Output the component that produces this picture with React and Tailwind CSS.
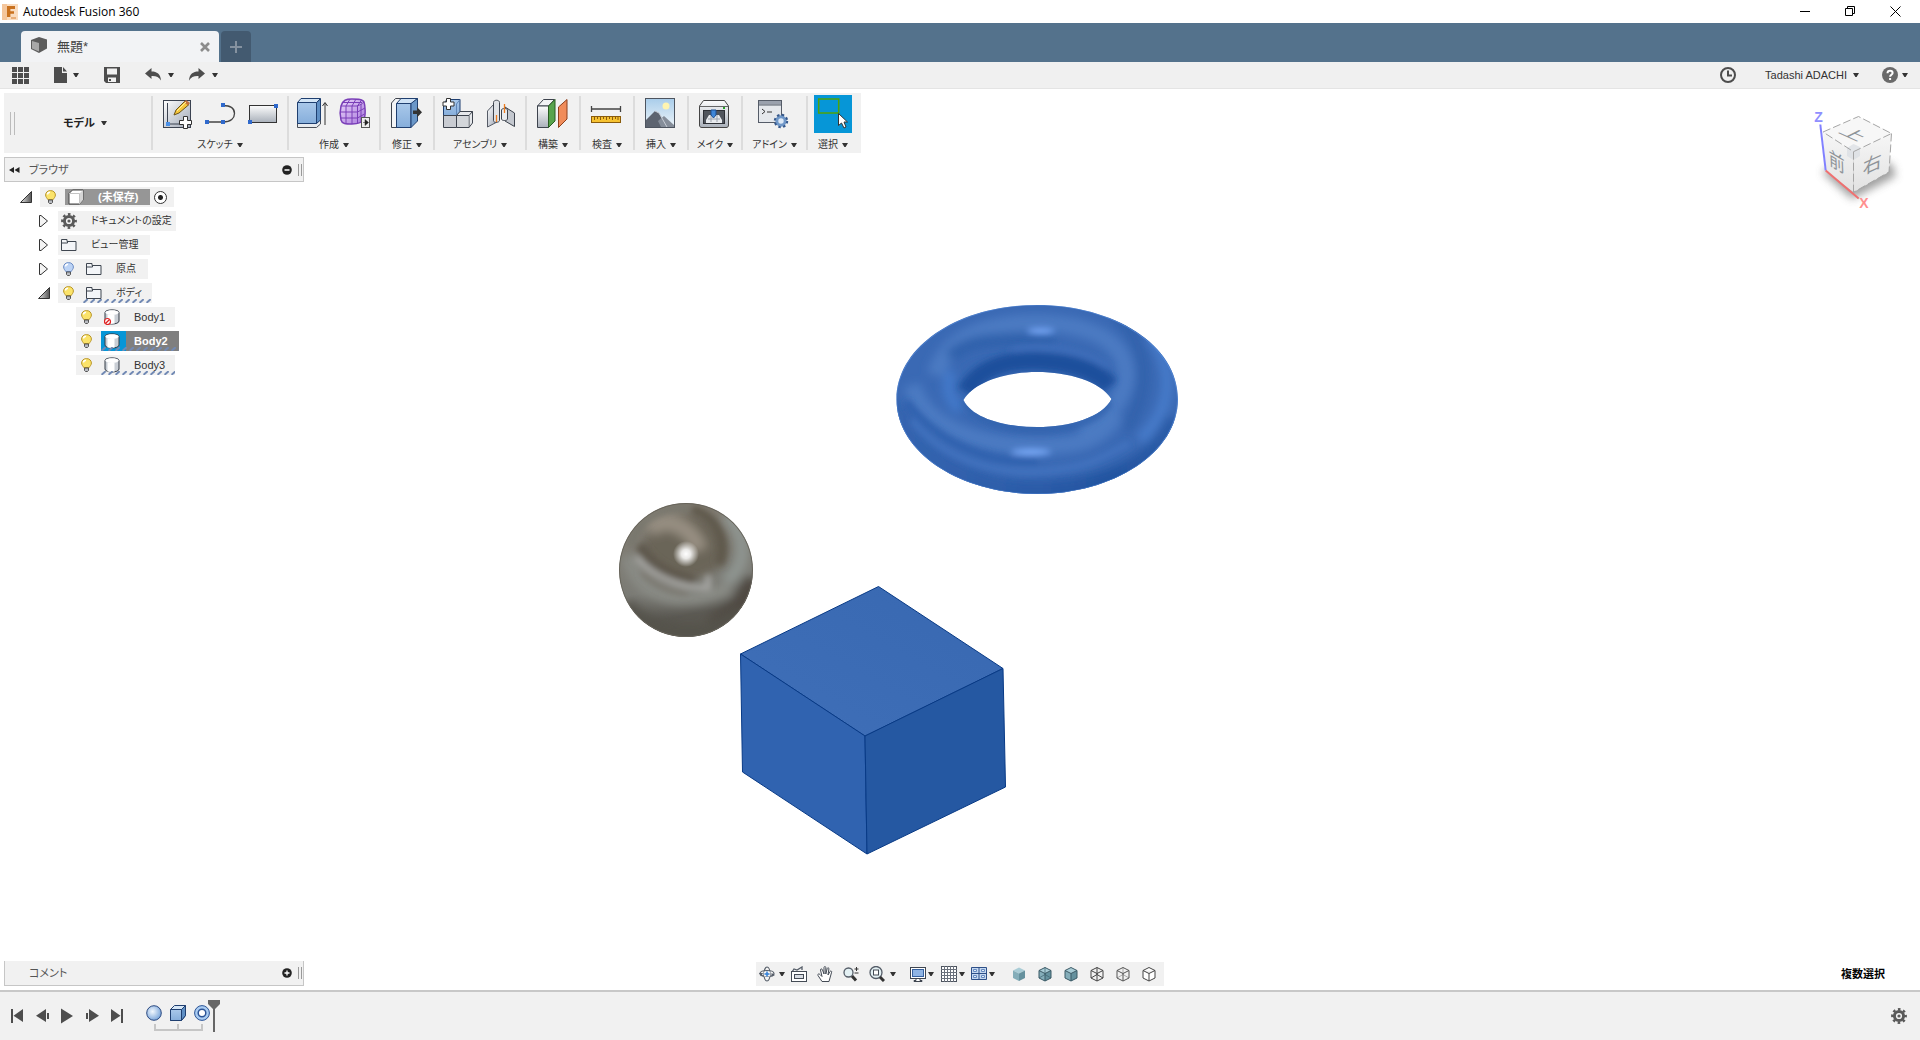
import { useState } from "react";

const uiFont =
  "font-['Liberation_Sans','Noto_Sans_CJK_JP',sans-serif] [font-feature-settings:'palt']";

export default function App() {
  return (
    <div
      className={`min-h-screen flex flex-col bg-white text-[11px] leading-4 text-[#333] ${uiFont}`}
    >
      <Defs />
      <TitleBar />
      <DocumentTabs />
      <QuickAccess />

      {/* Viewport with the panels floating over the model */}
      <main className="relative flex flex-1 flex-col">
        <Scene />
        <ViewCube />
        <Ribbon />
        <Browser />
        <div className="relative mt-auto grid grid-cols-[1fr_auto_1fr] items-end pb-1">
          <Comments />
          <NavigationBar />
          <p className="self-center pr-[35px] text-right font-bold text-black">
            複数選択
          </p>
        </div>
      </main>

      <Timeline />
    </div>
  );
}

// ---- Shared bits ----
function Icon({ size = 16, className = "", children }) {
  return (
    <svg
      width={size}
      height={size}
      viewBox={`0 0 ${size} ${size}`}
      fill="none"
      className={`shrink-0 ${className}`}
      aria-hidden="true"
    >
      {children}
    </svg>
  );
}

function Arrow({ className = "" }) {
  return (
    <svg
      width="6"
      height="4"
      viewBox="0 0 6 4"
      className={`shrink-0 ${className}`}
      aria-hidden="true"
    >
      <path d="M0 0h6L3.6 4H2.4z" fill="#333" />
    </svg>
  );
}

function Gear() {
  return (
    <Icon>
      <circle cx="8" cy="8" r="4.6" stroke="#5a5a5a" strokeWidth="3" />
      <circle
        cx="8"
        cy="8"
        r="6.7"
        stroke="#5a5a5a"
        strokeWidth="2.4"
        strokeDasharray="2.6 2.66"
        strokeDashoffset="1.3"
      />
      <circle cx="8" cy="8" r="1.6" fill="#5a5a5a" />
    </Icon>
  );
}

// Gradients used by the icons
function Defs() {
  return (
    <svg className="absolute size-0" aria-hidden="true">
      <defs>
        <linearGradient id="steel" x1="0" y1="0" x2="0" y2="1">
          <stop offset="0" stopColor="#fdfdfd" />
          <stop offset="1" stopColor="#a9b0ba" />
        </linearGradient>
        <linearGradient id="steelDiag" x1="0" y1="0" x2="1" y2="1">
          <stop offset="0" stopColor="#ffffff" />
          <stop offset="1" stopColor="#9ea6b4" />
        </linearGradient>
        <linearGradient id="sky" x1="0" y1="0" x2="0" y2="1">
          <stop offset="0" stopColor="#a9c8ea" />
          <stop offset="1" stopColor="#86aedb" />
        </linearGradient>
        <linearGradient id="photo" x1="0" y1="0" x2="0" y2="1">
          <stop offset="0" stopColor="#a9cdea" />
          <stop offset="1" stopColor="#eef5fa" />
        </linearGradient>
        <linearGradient id="mesh" x1="0" y1="0" x2="1" y2="1">
          <stop offset="0" stopColor="#ead6fa" />
          <stop offset="1" stopColor="#a878dc" />
        </linearGradient>
        <radialGradient id="ball" cx="0.4" cy="0.4" r="0.6">
          <stop offset="0" stopColor="#f2f8fe" />
          <stop offset="1" stopColor="#7fa9dc" />
        </radialGradient>
        <linearGradient id="corner" x1="0" y1="0" x2="1" y2="0">
          <stop offset="0" stopColor="#e5e5e5" />
          <stop offset="1" stopColor="#555" />
        </linearGradient>
        <pattern
          id="hatch"
          width="7"
          height="4"
          patternUnits="userSpaceOnUse"
        >
          <path
            d="M1.2 3.2L4 0.8"
            stroke="#7189b4"
            strokeWidth="2"
            strokeLinecap="round"
          />
        </pattern>
      </defs>
    </svg>
  );
}

// ---- Window chrome ----
function TitleBar() {
  return (
    <header className="flex h-[23px] items-center pl-[2px] pr-[19px]">
      <Icon size={16}>
        <rect width="16" height="16" fill="#f9dcc0" />
        <path d="M0 0h5v16H0z" fill="#f4c69c" />
        <path
          d="M5 2h8v3H8.4v2.2h3.6v2.6H8.4V13H5z"
          fill="#c9711e"
        />
        <path d="M9 13h5v2H9z" fill="#e9ae78" />
      </Icon>
      <h1 className="ml-[5px] font-['Open_Sans',sans-serif] text-xs text-black">
        Autodesk Fusion 360
      </h1>
      <div className="ml-auto flex items-center gap-[34px] text-black">
        <button type="button" aria-label="Minimize">
          <Icon size={11}>
            <path d="M0 5.5h10" stroke="currentColor" />
          </Icon>
        </button>
        <button type="button" aria-label="Restore">
          <Icon size={11}>
            <path
              d="M0.5 2.5h7v7h-7zM2.5 2.5v-2h7v7h-2"
              stroke="currentColor"
            />
          </Icon>
        </button>
        <button type="button" aria-label="Close">
          <Icon size={11}>
            <path d="M0.5 0.5l10 10M10.5 0.5l-10 10" stroke="currentColor" />
          </Icon>
        </button>
      </div>
    </header>
  );
}

function DocumentTabs() {
  return (
    <div className="flex h-[39px] items-end gap-[2px] bg-[#54728c] pl-[21px]">
      <div className="flex h-[31px] w-[198px] items-center rounded-t bg-[#f2f3f5] pl-[10px] pr-[9px]">
        <Icon size={16} className="mb-1">
          <path d="M0 3l8-3 8 2.5v9L8 16l-8-4z" fill="#5c5c5c" />
          <path d="M1 4l7 2v8.6L1 11.4z" fill="#a8a8a8" />
        </Icon>
        <span className="ml-[10px] text-[13px] text-[#444]">無題*</span>
        <button type="button" aria-label="Close tab" className="ml-auto">
          <Icon size={10}>
            <path
              d="M1 1l8 8M9 1l-8 8"
              stroke="#8c8c8c"
              strokeWidth="2.6"
            />
          </Icon>
        </button>
      </div>
      <button
        type="button"
        aria-label="New tab"
        className="flex h-[31px] w-[30px] items-center justify-center rounded-t bg-[#435a70]"
      >
        <Icon size={12}>
          <path d="M6 0v12M0 6h12" stroke="#8592a0" strokeWidth="2" />
        </Icon>
      </button>
    </div>
  );
}

function QuickAccess() {
  return (
    <div className="flex h-[27px] items-center border-b border-[#e4e4e4] bg-[#f0f0f0] pl-3 pr-3">
      <button type="button" aria-label="Data panel">
        <Icon size={17}>
          <path
            d="M0 0h5v5H0zM6 0h5v5H6zM12 0h5v5h-5zM0 6h5v5H0zM6 6h5v5H6zM12 6h5v5h-5zM0 12h5v5H0zM6 12h5v5H6zM12 12h5v5h-5z"
            fill="#4d4d4d"
          />
        </Icon>
      </button>
      <button
        type="button"
        aria-label="File"
        className="ml-[25px] flex items-center gap-[3px]"
      >
        <Icon>
          <path d="M0 0h8v6h5v10H0zM9 0l4 4.6H9z" fill="#4d4d4d" />
        </Icon>
        <Arrow />
      </button>
      <button type="button" aria-label="Save" className="ml-[25px]">
        <Icon>
          <path
            fillRule="evenodd"
            d="M0 0h16v16H2l-2-2zM3 1.5v6h10v-6zM4 10.5V15h8v-4.5z"
            fill="#4d4d4d"
          />
          <path d="M5 12h2v2H5z" fill="#4d4d4d" />
        </Icon>
      </button>
      <button
        type="button"
        aria-label="Undo"
        className="ml-[25px] flex items-center gap-[7px]"
      >
        <Icon>
          <path
            d="M0 6.5L6.5 1v3.5C12 4.5 15.5 7 16 13.5C14 9.8 11 8.8 6.5 9V12z"
            fill="#4d4d4d"
          />
        </Icon>
        <Arrow />
      </button>
      <button
        type="button"
        aria-label="Redo"
        className="ml-[15px] flex items-center gap-[7px]"
      >
        <Icon>
          <path
            d="M16 6.5L9.5 1v3.5C4 4.5 0.5 7 0 13.5C2 9.8 5 8.8 9.5 9V12z"
            fill="#4d4d4d"
          />
        </Icon>
        <Arrow />
      </button>

      <button type="button" aria-label="Job status" className="ml-auto">
        <Icon>
          <circle cx="8" cy="8" r="7" stroke="#4d4d4d" strokeWidth="2" />
          <path d="M8 3.5V8.5h4" stroke="#4d4d4d" strokeWidth="2" />
        </Icon>
      </button>
      <button type="button" className="ml-[29px] flex items-center gap-[6px]">
        Tadashi ADACHI
        <Arrow />
      </button>
      <button
        type="button"
        aria-label="Help"
        className="ml-[23px] flex items-center gap-1"
      >
        <Icon>
          <circle cx="8" cy="8" r="8" fill="#6a6a6a" />
          <path
            d="M5.500 6.2C5.5 3 10.6 3.2 10.6 6C10.6 7.8 8.1 7.8 8.1 9.8M8.1 11v2"
            stroke="#fff"
            strokeWidth="2"
          />
        </Icon>
        <Arrow />
      </button>
    </div>
  );
}

// ---- Ribbon ----
const groups = [
  { label: "スケッチ", pad: "px-[6px]", tools: [SketchIcon, ArcIcon, RectIcon] },
  { label: "作成", pad: "px-[5px]", tools: [ExtrudeIcon, FormIcon] },
  { label: "修正", pad: "px-[7px]", tools: [PressPullIcon] },
  { label: "アセンブリ", pad: "px-[5px]", tools: [ComponentIcon, JointIcon] },
  { label: "構築", pad: "px-[7px]", tools: [PlaneIcon] },
  { label: "検査", pad: "px-[7px]", tools: [MeasureIcon] },
  { label: "挿入", pad: "px-[7px]", tools: [ImageIcon] },
  { label: "メイク", pad: "px-[7px]", tools: [PrintIcon] },
  { label: "アドイン", pad: "px-[9px]", tools: [ScriptIcon] },
  { label: "選択", pad: "pl-[6px] pr-[9px]", tools: [SelectIcon], active: true },
];

function Ribbon() {
  return (
    <div className="relative mt-1 ml-1 flex h-[60px] self-start bg-[#f1f1f1]">
      <div className="flex w-[147px] items-center pl-[6px]">
        <span className="h-[23px] w-[5px] border-x border-[#bbb]" />
        <button
          type="button"
          className="mx-auto flex items-center gap-[6px] pl-1 font-bold text-[#222]"
        >
          モデル
          <Arrow />
        </button>
      </div>
      {groups.map((group) => (
        <RibbonGroup key={group.label} {...group} />
      ))}
    </div>
  );
}

function RibbonGroup({ label, pad, tools, active }) {
  return (
    <div className="flex">
      <span className="my-[3px] w-[2px] bg-[#dcdcdc]" />
      <div className={`flex flex-col items-center pt-[2px] ${pad}`}>
        <div className="flex gap-1">
          {tools.map((Tool, i) => (
            <button
              key={i}
              type="button"
              aria-label={`${label} ${i + 1}`}
              className={active ? "bg-[#0696d7]" : ""}
            >
              <Tool />
            </button>
          ))}
        </div>
        <button
          type="button"
          className="mt-1 flex h-4 items-center gap-1 whitespace-nowrap text-[10px]"
        >
          {label}
          <Arrow />
        </button>
      </div>
    </div>
  );
}

function SketchIcon() {
  return (
    <Icon size={38}>
      <rect x="4.5" y="5.5" width="27" height="27" fill="url(#steelDiag)" stroke="#3b4250" />
      <path d="M8.5 8v21H29" stroke="#3b4250" />
      <rect x="7" y="27" width="4" height="4" fill="#4a90e8" />
      <path d="M15 20l2-5L26 6l4 3.5L20 18z" fill="#f7c73c" stroke="#6b5418" />
      <path d="M25 7l2-2 4 3-2 2.5z" fill="#c0703c" />
      <path d="M18 16l9-9" stroke="#fdf0a0" />
      <path
        d="M24.5 21.5h4v4h4v4h-4v4h-4v-4h-4v-4h4z"
        fill="#fff"
        stroke="#333"
      />
    </Icon>
  );
}

function ArcIcon() {
  return (
    <Icon size={38}>
      <path
        d="M6 27H22C30 27 33.5 23 33.5 18.5S30 10.5 22 10.5"
        stroke="#444"
        strokeWidth="1.3"
      />
      <path d="M4 25h4v4H4zM20 25h4v4h-4zM20 8h4v4h-4z" fill="#2f69cc" />
    </Icon>
  );
}

function RectIcon() {
  return (
    <Icon size={38}>
      <rect x="6.5" y="10.5" width="27" height="17" fill="url(#steel)" stroke="#333" />
      <path d="M5 25h4v4H5zM31 9h4v4h-4z" fill="#2f69cc" />
    </Icon>
  );
}

function ExtrudeIcon() {
  return (
    <Icon size={38}>
      <path d="M3.5 28h19l4-4v5l-4 3.5h-19z" fill="#e8ebef" stroke="#4a4f58" />
      <path d="M22.5 7.5l4-3.5v21l-4 3.5z" fill="#5f8fc4" stroke="#1f3f70" />
      <path d="M3.5 7.5L7 3.5h19.5l-4 4z" fill="#d3e5f6" stroke="#1f3f70" />
      <path d="M3.5 7.5h19v21h-19z" fill="url(#sky)" stroke="#1f3f70" />
      <path d="M31 30V8M28.5 11L31 7.5l2.5 3.5" stroke="#333" />
    </Icon>
  );
}

function FormIcon() {
  return (
    <Icon size={38}>
      <path
        d="M5 11C7 5 10 4 16 4S27 4 28 7 30 20 28 24 22 29 16 29 6 29 5 25 4 15 5 11z"
        fill="url(#mesh)"
        stroke="#7a3fb8"
        strokeWidth="1.5"
      />
      <path
        d="M5 11h16c3-1 5-2 7-4M4.500 17h17l7.5-4M4.5 23h17l7-4M10 29V11l4-7M16 29V11l4-7M21.5 29V11l4-6M25 27V9M7 7.5h19"
        stroke="#7a3fb8"
      />
      <rect x="25.5" y="22.5" width="8" height="10" fill="#eee" stroke="#555" />
      <path d="M27 27.5h3M29 24.500l3.500 3-3.500 3z" fill="#222" stroke="#222" strokeWidth="0.5" />
    </Icon>
  );
}

function PressPullIcon() {
  return (
    <Icon size={38}>
      <path d="M3.5 8l4-4.5h8L11 9v23.5H3.5z" fill="#f4f5f7" stroke="#3d434d" />
      <path d="M8.5 8.5L13 3.5h16.5l-6 5z" fill="#cfe2f5" stroke="#1f3f70" />
      <path d="M8.5 8.5h14.500v24H8.5z" fill="url(#sky)" stroke="#1f3f70" />
      <path d="M23 8.5l6.5-5V26L23 32.5z" fill="#6a97c8" stroke="#1f3f70" />
      <path d="M25 15.5h4V12l5 5.2-5 5.2V19h-4z" fill="#333" />
    </Icon>
  );
}

function ComponentIcon() {
  return (
    <Icon size={38}>
      <path d="M3.5 8.5L7 4.5h13V17l-3.5 4h-13z" fill="url(#sky)" stroke="#1f3f70" />
      <path d="M16.5 20.5V9M16.5 9L20 4.5" stroke="#5f86b8" />
      <path d="M3.5 20.5h13v12h-13z" fill="#c9ccd2" stroke="#3d434d" />
      <path d="M16.5 20.5L20 16.5h12.5V28L29 32.5H16.5z" fill="#e6e8eb" stroke="#3d434d" />
      <path d="M16.5 20.5H29v12M29 20.5l3.5-4" stroke="#3d434d" />
      <path d="M17 21h11.5v11H17z" fill="#d3d6da" />
      <path
        d="M6.5 3.5h4v3.5H14v4h-3.500v3.5h-4V11H3V7h3.500z"
        fill="#fff"
        stroke="#333"
      />
    </Icon>
  );
}

function JointIcon() {
  return (
    <Icon size={38}>
      <path d="M5.5 16L12 9l3 4v14l-9.5 5z" fill="url(#steelDiag)" stroke="#555b66" />
      <path d="M11.5 7.5c0-3 6-3 6 0v18c0 2-6 3-6 0z" fill="#dfe2e6" stroke="#3d434d" />
      <path d="M23 12l9.5 6v13.5L23 26z" fill="#c4c8cf" stroke="#3d434d" />
      <path d="M19.500 15c0-2 6-2 6 0v9c0 2-6 2-6 0z" fill="#e9ebee" stroke="#3d434d" />
      <path d="M14.5 20v7M22.5 9v9" stroke="#ee7b1c" strokeWidth="1.3" />
    </Icon>
  );
}

function PlaneIcon() {
  return (
    <Icon size={38}>
      <path d="M3.5 11L9.5 4.5h11l-6 6.5z" fill="#f2f3f5" stroke="#3d434d" />
      <path d="M3.5 11h11v21.5h-11z" fill="url(#steel)" stroke="#3d434d" />
      <path d="M14.5 11l6.5-6.5V26l-6.5 6.5z" fill="#57a34c" stroke="#285c22" />
      <path d="M24.5 12l8.5-7.5V24l-8.5 8.5z" fill="#f08c5a" stroke="#8d3f1c" />
    </Icon>
  );
}

function MeasureIcon() {
  return (
    <Icon size={38}>
      <path d="M3.5 11v6M32.5 11v6M3.5 14h29" stroke="#444" strokeWidth="1.3" />
      <rect x="3.5" y="21.5" width="29" height="6" fill="#f6c231" stroke="#8a5c0c" />
      <path
        d="M6.5 22v3M9.5 22v2M12.5 22v3M15.5 22v2M18.5 22v3M21.5 22v2M24.5 22v3M27.5 22v2M30 22v3"
        stroke="#8a5c0c"
      />
    </Icon>
  );
}

function ImageIcon() {
  return (
    <Icon size={38}>
      <rect x="3.5" y="3.5" width="29" height="29" fill="url(#photo)" stroke="#4d545f" />
      <circle cx="24" cy="11" r="3.5" fill="#fff4b0" />
      <path d="M4 25l9-9 4 2 8 14H4z" fill="#5d6470" />
      <path d="M16 26l6-5 10 9v2H19z" fill="#858d99" />
      <path d="M13 16l4 2 8 14" stroke="#c8cdd5" />
    </Icon>
  );
}

function PrintIcon() {
  return (
    <Icon size={38}>
      <path d="M3.5 11l4-5.5h21l4 5.5v19c0 2-1 2.5-2.5 2.5H6c-2 0-2.500-1-2.500-2.5z" fill="url(#steel)" stroke="#444" />
      <path d="M3.5 11.5h29" stroke="#666" />
      <rect x="7.5" y="15.5" width="21" height="13" fill="#50555d" stroke="#2c2f35" />
      <path d="M10 25l3-5h10l3 5v3H10z" fill="#e8ebef" />
      <path d="M12 24h12M15 20v7M21 20v7" stroke="#9aa1ab" />
      <path d="M15 15h5v5l-2.5 3-2.5-3z" fill="#3e86d8" stroke="#1d4f90" />
      <rect x="27" y="12" width="2" height="2" fill="#25a025" />
    </Icon>
  );
}

function ScriptIcon() {
  return (
    <Icon size={38}>
      <rect x="3.5" y="5.5" width="23" height="22" fill="#e5e8ec" stroke="#555c68" />
      <path d="M4 6h22v3.5H4z" fill="#9aa1ad" />
      <path d="M3.5 10h23" stroke="#555c68" />
      <path d="M7 14l3 2.5L7 19M12 17h5" stroke="#333" />
      <circle cx="26" cy="26" r="4.2" fill="#dce8f6" stroke="#6f97c8" strokeWidth="3" />
      <circle
        cx="26"
        cy="26"
        r="6.2"
        stroke="#35588c"
        strokeWidth="2"
        strokeDasharray="2.5 2.37"
      />
    </Icon>
  );
}

function SelectIcon() {
  return (
    <Icon size={38}>
      <rect x="4.7" y="4" width="20" height="14" stroke="#4fa30a" strokeWidth="1.5" />
      <path
        d="M24.5 18.5v12l3-2.5 2.5 5 2-1-2-5h3.5z"
        fill="#fff"
        stroke="#333"
      />
    </Icon>
  );
}

// ---- Browser tree ----
function Browser() {
  const [open, setOpen] = useState(true);

  return (
    <section className="relative mt-1 ml-1 w-[300px]">
      <header className="flex h-[25px] items-center border border-[#c6c6c6] bg-[#f1f1f1] pl-1 pr-[1px]">
        <Icon size={12}>
          <path d="M0 6l5-3v6zM5.5 6l5-3v6z" fill="#222" />
        </Icon>
        <h2 className="ml-2 text-[#555]">ブラウザ</h2>
        <button
          type="button"
          aria-label="Collapse browser"
          className="ml-auto"
          onClick={() => setOpen(!open)}
        >
          <Icon size={10}>
            <circle cx="5" cy="5" r="4.8" fill="#222" />
            <path d="M2.5 5h5" stroke="#fff" strokeWidth="1.5" />
          </Icon>
        </button>
        <span className="ml-[6px] h-3 w-1 border-x border-[#999]" />
      </header>
      {open && (
        <ul className="mt-[5px] space-y-1">
          <li className="flex items-center gap-2 pl-4">
            <Toggle open />
            <div className="flex h-5 items-center bg-[#f1f1f1] pl-[5px] pr-[7px]">
              <Bulb on />
              <span className="ml-2 flex h-4 items-center bg-[#969696] pl-[3px] pr-3">
                <BoxIcon />
                <span className="ml-[14px] font-bold text-white">
                  (未保存)
                </span>
              </span>
              <input
                type="radio"
                name="active-component"
                aria-label="Activate component"
                defaultChecked
                className="ml-1 size-[13px] appearance-none rounded-full border border-[#333] bg-[radial-gradient(circle,#222_0_2px,#fff_3px)]"
              />
            </div>
          </li>
          <TreeItem icon={<Gear />} label="ドキュメントの設定" pad="pr-1" />
          <TreeItem icon={<Folder />} label="ビュー管理" pad="pr-3" />
          <TreeItem bulb="off" icon={<Folder />} label="原点" pad="pr-3" />
          <TreeItem bulb="on" icon={<Folder />} label="ボディ" pad="pr-[10px]" open hatched />
          <TreeItem bulb="on" icon={<BodyIcon blocked />} label="Body1" pad="pr-[10px]" leaf />
          <TreeItem bulb="on" icon={<BodyIcon />} label="Body2" pad="pr-[11px]" leaf hatched selected />
          <TreeItem bulb="on" icon={<BodyIcon />} label="Body3" pad="pr-[10px]" leaf hatched />
        </ul>
      )}
    </section>
  );
}

function TreeItem({ bulb, icon, label, pad, open, leaf, hatched, selected }) {
  return (
    <li className={`flex items-center gap-2 ${leaf ? "pl-16" : "pl-[34px] text-[10px]"}`}>
      {!leaf && <Toggle open={open} />}
      <div className={`flex h-5 items-center bg-[#f1f1f1] ${leaf ? "ml-2" : ""}`}>
        {bulb && (
          <span className="pl-[5px] pr-2">
            <Bulb on={bulb === "on"} />
          </span>
        )}
        <div className="relative flex h-5 items-center">
          <span
            className={`flex h-full items-center pl-[3px] pr-[6px] ${
              selected ? "bg-[#0696d7]" : ""
            }`}
          >
            {icon}
          </span>
          <span
            className={`flex h-full items-center pl-2 ${pad} ${
              selected ? "bg-[#7f7f7f] font-bold text-white" : ""
            }`}
          >
            {label}
          </span>
          {hatched && (
            <svg
              className="absolute inset-x-0 bottom-0 h-1 w-full"
              aria-hidden="true"
            >
              <rect width="100%" height="4" fill="url(#hatch)" />
            </svg>
          )}
        </div>
      </div>
    </li>
  );
}

function Toggle({ open }) {
  return (
    <button type="button" aria-label={open ? "Collapse" : "Expand"}>
      <Icon size={12}>
        {open ? (
          <path d="M0.5 11.5L11.5 0.5v11z" fill="url(#corner)" stroke="#333" />
        ) : (
          <path d="M1.5 0.5h1.500l6.500 5.500-6.500 5.500H1.500z" fill="#f4f4f4" stroke="#333" />
        )}
      </Icon>
    </button>
  );
}

function Bulb({ on }) {
  return (
    <svg width="12" height="14" viewBox="0 0 12 14" aria-hidden="true">
      <path
        d="M5.500 0.600C2.500 0.600 0.600 2.600 0.600 5c0 2 1.400 3 2.200 4.500h5.400C9 8 10.400 7 10.400 5c0-2.400-1.900-4.400-4.900-4.400z"
        fill={on ? "#fbe36a" : "#bcd3f5"}
        stroke={on ? "#b8952a" : "#6c8cc4"}
      />
      <path d="M2.500 4.500c0-1.500 1-2.300 2.500-2.300" stroke="#fff" strokeWidth="1.500" fill="none" />
      <path d="M3.500 10h4v2.500l-1 1h-2l-1-1z" fill="#b9bcc2" stroke="#555" />
    </svg>
  );
}

function BoxIcon() {
  return (
    <Icon>
      <path d="M1 4.5L4.5 1H15v10l-3.500 4H1z" fill="#fff" stroke="#444" />
      <path d="M11.500 4.5L15 1v10l-3.5 4z" fill="#d5d5d5" />
      <path d="M1 4.500h10.5V15" stroke="#c4c4c4" />
    </Icon>
  );
}

function Folder() {
  return (
    <Icon>
      <path
        d="M0.5 13.5v-11h5.5v2h9v9z"
        fill="#f3f5f8"
        stroke="#3f4650"
      />
      <path d="M1 6h5.5V4.5" stroke="#3f4650" />
    </Icon>
  );
}

function BodyIcon({ blocked }) {
  return (
    <Icon>
      <path
        d="M1 3.5C1 0 15 0 15 3.5V12c0 4-14 4-14 0z"
        fill="#c9ced5"
        stroke="#333a45"
      />
      <path d="M1.5 4C3 6.5 13 6.5 14.5 4V3C13 0.5 3 0.5 1.5 3z" fill="#fff" />
      <path d="M3.500 5.5v9c2 .5 4.500 .5 7 0v-9z" fill="#fff" />
      {blocked && (
        <>
          <circle cx="3.5" cy="12.5" r="3" fill="#fff" stroke="#e02020" strokeWidth="1.2" />
          <path d="M1.5 14.5l4-4" stroke="#e02020" strokeWidth="1.2" />
        </>
      )}
    </Icon>
  );
}

function Comments() {
  return (
    <section className="ml-1 flex h-[25px] w-[300px] items-center border border-t-0 border-[#c6c6c6] bg-[#f1f1f1] pl-6 pr-[1px]">
      <h2 className="text-[#555]">コメント</h2>
      <button type="button" aria-label="Expand comments" className="ml-auto">
        <Icon size={10}>
          <circle cx="5" cy="5" r="4.8" fill="#222" />
          <path d="M2.5 5h5M5 2.5v5" stroke="#fff" strokeWidth="1.3" />
        </Icon>
      </button>
      <span className="ml-[6px] h-3 w-1 border-x border-[#999]" />
    </section>
  );
}

// ---- Navigation bar ----
const hexagon = "M8 1.500l6 3v7.500l-6 3-6-3V4.500z";
const frontEdges = "M2 4.500l6 3 6-3M8 7.500V15";
const backEdges = "M8 1.500V8.500M2 12l6-3.500 6 3.500";

function NavigationBar() {
  return (
    <nav className="flex h-6 items-center bg-[#f1f1f1] pl-[3px] pr-[7px]">
      <NavButton label="Orbit" menu="ml-1">
        <ellipse cx="8" cy="7.500" rx="7" ry="3" stroke="#555d68" strokeWidth="1.200" />
        <ellipse cx="8" cy="8" rx="3" ry="7" stroke="#555d68" strokeWidth="1.200" />
        <path d="M5 5.500h6v5H5z" fill="#f1f1f1" />
        <path d="M8 5.500v5M5.500 8h5" stroke="#2f7fd8" strokeWidth="1.500" />
        <path d="M0 7l2 3.500L4 7zM16 9l-3.500-2v4z" fill="#555d68" />
      </NavButton>
      <NavButton label="Look at" gap="ml-[6px]">
        <path d="M1 6l2-3 3 1 5-3v3" stroke="#555d68" strokeWidth="1.300" />
        <rect x="0.500" y="5.500" width="15" height="10" fill="#fff" stroke="#444b55" />
        <rect x="3.500" y="8.500" width="9" height="4" fill="#d8dce2" stroke="#444b55" />
      </NavButton>
      <NavButton label="Pan" gap="ml-[10px]">
        <path
          d="M5 15.500L1 9.500c-.8-1.500 1-2 2-1l2 2L3.500 4c0-1.500 1.500-1.500 2 0L7 8V1.500c0-1.300 1.800-1.300 1.800 0V8l1.400-5.500c.4-1.200 2-.8 1.700.5L11 9l2-3.500c.7-1 2-.5 1.600.7L12 15.500z"
          fill="#fff"
          stroke="#444b55"
        />
      </NavButton>
      <NavButton label="Zoom" gap="ml-[10px]">
        <circle cx="5.500" cy="6.500" r="4.500" fill="#e4f1f4" stroke="#555d68" strokeWidth="1.300" />
        <path d="M9 10l4 4.500" stroke="#333" strokeWidth="3" />
        <path d="M11.500 3h4M13.500 1v4M11.500 7h4" stroke="#333" />
      </NavButton>
      <NavButton label="Fit" gap="ml-[10px]" menu="ml-[5px]">
        <circle cx="7" cy="6.500" r="6" fill="#e4f1f4" stroke="#555d68" strokeWidth="1.300" />
        <rect x="4.500" y="4" width="5" height="5" stroke="#444b55" fill="#fff" />
        <path d="M11 11l4 4" stroke="#333" strokeWidth="3" />
      </NavButton>
      <NavButton label="Display settings" gap="ml-[14px]" menu="ml-[2px]">
        <rect x="0.500" y="1.500" width="15" height="11" fill="#fff" stroke="#3f4650" />
        <rect x="2.500" y="3.500" width="11" height="7" fill="#8fb4e4" stroke="#36619f" />
        <path d="M6 13v1.500H4v1h8v-1h-2V13" fill="#fff" stroke="#3f4650" />
      </NavButton>
      <NavButton label="Grid" gap="ml-[7px]" menu="ml-[2px]">
        <rect x="0.500" y="0.500" width="15" height="15" fill="#fff" stroke="#4d545f" />
        <path
          d="M3.500 0v16M6.500 0v16M9.500 0v16M12.500 0v16M0 3.500h16M0 6.500h16M0 9.500h16M0 12.500h16"
          stroke="#6a717c"
        />
      </NavButton>
      <NavButton label="Viewports" gap="ml-[6px]" menu="ml-[2px]">
        <path d="M0.500 1.500h15v12h-15zM8 1.500v12M0.500 7.500h15" fill="#c5d8f0" stroke="#2d4f88" />
        <path d="M2.500 3.500h3v2h-3zM10.500 3.500h3v2h-3zM2.500 9.500h3v2h-3zM10.500 9.500h3v2h-3z" fill="#e4eefa" stroke="#6488bf" />
      </NavButton>
      <NavButton label="Shaded" gap="ml-4">
        <ShadedCube />
      </NavButton>
      <NavButton label="Shaded with hidden edges" gap="ml-[10px]">
        <ShadedCube />
        <path d={backEdges} stroke="#3e636e" strokeWidth="0.700" />
        <path d={hexagon + frontEdges} stroke="#3b5a66" />
      </NavButton>
      <NavButton label="Shaded with visible edges" gap="ml-[10px]">
        <ShadedCube />
        <path d={hexagon + frontEdges} stroke="#3b5a66" />
      </NavButton>
      <NavButton label="Wireframe" gap="ml-[10px]">
        <path d={hexagon + frontEdges + backEdges} stroke="#444" />
      </NavButton>
      <NavButton label="Wireframe with hidden edges" gap="ml-[10px]">
        <path d={backEdges} stroke="#aaa" />
        <path d={hexagon + frontEdges} stroke="#555" />
      </NavButton>
      <NavButton label="Wireframe with visible edges" gap="ml-[10px]">
        <path d={hexagon + frontEdges} fill="#fff" stroke="#444" />
      </NavButton>
    </nav>
  );
}

function NavButton({ label, gap = "", menu, children }) {
  return (
    <button
      type="button"
      aria-label={label}
      className={`flex items-center ${gap}`}
    >
      <Icon>{children}</Icon>
      {menu && <Arrow className={menu} />}
    </button>
  );
}

function ShadedCube() {
  return (
    <>
      <path d="M8 1.500l6 3-6 3-6-3z" fill="#a9ccd6" />
      <path d="M2 4.500l6 3V15l-6-3z" fill="#84adb9" />
      <path d="M14 4.500l-6 3V15l6-3z" fill="#65919e" />
    </>
  );
}

// ---- Timeline ----
const playback = [
  { label: "Go to start", d: "M0 1h2v14H0zM12 1v13L2.500 7.700z" },
  { label: "Step back", d: "M10 1v13L0 7.700zM11 5h2v6h-2z" },
  { label: "Play", d: "M0 0.500v15L12 8z" },
  { label: "Step forward", d: "M3 1v13l10-6.300zM0 5h2v6H0z" },
  { label: "Go to end", d: "M0 1v13l9.500-6.300zM10 1h2v14h-2z" },
];

function Timeline() {
  return (
    <footer className="flex h-[50px] items-center border-t-2 border-[#c8c8c8] bg-[#f1f1f1] pl-[11px] pr-[13px]">
      <div className="flex gap-3">
        {playback.map(({ label, d }) => (
          <button key={label} type="button" aria-label={label}>
            <svg width="13" height="16" viewBox="0 0 13 16" aria-hidden="true">
              <path d={d} fill="#4d4d4d" />
            </svg>
          </button>
        ))}
      </div>
      <div className="ml-[22px] mt-1">
        <div className="flex gap-2">
          <button type="button" aria-label="Sphere">
            <Icon>
              <circle cx="8" cy="8" r="7.300" fill="url(#ball)" stroke="#2c4a80" />
            </Icon>
          </button>
          <button type="button" aria-label="Box">
            <Icon>
              <path d="M0.500 4.500l4-4h11v10l-4 5h-11z" fill="#d6e7f7" stroke="#1f3f70" />
              <path d="M11.500 4.500l4-4v10l-4 5z" fill="#5f8fc4" stroke="#1f3f70" />
              <path d="M0.500 4.500h11v11h-11z" fill="url(#sky)" stroke="#1f3f70" />
            </Icon>
          </button>
          <button type="button" aria-label="Torus">
            <Icon>
              <circle cx="8" cy="8" r="5.500" stroke="#a9ccf2" strokeWidth="4" />
              <circle cx="8" cy="8" r="7.400" stroke="#2c5496" />
              <circle cx="8" cy="8" r="3.800" fill="#fff" stroke="#2c5496" strokeWidth="1.500" />
            </Icon>
          </button>
        </div>
        <svg width="64" height="8" viewBox="0 0 64 8" className="mt-[3px]" aria-hidden="true">
          <path d="M9 0v6h47V0M32 0v6" stroke="#c6c6c6" strokeWidth="2" fill="none" />
        </svg>
      </div>
      <svg width="12" height="32" viewBox="0 0 12 32" className="-ml-[2px]" aria-hidden="true">
        <path d="M0 0h12v4L7 9v23H5V9L0 4z" fill="#666" />
      </svg>
      <button type="button" aria-label="Timeline settings" className="ml-auto">
        <Gear />
      </button>
    </footer>
  );
}

// ---- View cube ----
function ViewCube() {
  return (
    <svg
      width="110"
      height="120"
      viewBox="1805 98 110 120"
      className="absolute top-[9px] right-[5px]"
      aria-label="View cube"
    >
      <defs>
        <filter id="cubeShadow" x="-30%" y="-30%" width="160%" height="160%">
          <feGaussianBlur stdDeviation="4" />
        </filter>
        <linearGradient id="cubeFace" x1="0" y1="0" x2="0" y2="1">
          <stop offset="0" stopColor="#f6f6f6" />
          <stop offset="1" stopColor="#e2e2e2" />
        </linearGradient>
      </defs>
      <path
        d="M1822 172l30 27 44-23-4-12-40-8z"
        fill="#888"
        opacity="0.800"
        filter="url(#cubeShadow)"
      />
      <path d="M1823 132l35.500-15.500 33 17-38 18.200z" fill="#f7f7f7" />
      <path d="M1823 132l30.500 19.700v40.600L1825.700 171z" fill="url(#cubeFace)" />
      <path d="M1891.500 133.500l-38 18.200v40.600L1889 172z" fill="url(#cubeFace)" />
      <path
        d="M1847 148l6.500-4 6.500 3v9l-6.500 4-6.500-4z"
        fill="#d9dde2"
        opacity="0.700"
      />
      <path
        d="M1823 132l35.500-15.500 33 17-38 18.200zM1853.500 151.700v40.600M1891.500 133.500L1889 172l-35.500 20.300"
        fill="none"
        stroke="#a5a5a5"
        strokeDasharray="8 3"
      />
      <g
        fill="#8f9499"
        fontSize="19"
        textAnchor="middle"
        fontFamily="'Noto Sans CJK JP', sans-serif"
      >
        <text transform="matrix(1.1 0.5 -0.8 0.4 1848 137)">上</text>
        <text transform="matrix(0.85 0.5 0.04 1.05 1837 169)">前</text>
        <text transform="matrix(1 -0.46 -0.04 1 1872 171)">右</text>
      </g>
      <path d="M1820.300 124.500l5.400 46" stroke="#8080ff" strokeWidth="2" />
      <path d="M1825.700 170.500l33 28" stroke="#f07070" strokeWidth="2" />
      <g fontSize="14" fontWeight="bold" textAnchor="middle">
        <text x="1818.500" y="122" fill="#8f8fff">Z</text>
        <text x="1864" y="208" fill="#ff8f8f">X</text>
      </g>
    </svg>
  );
}

// ---- 3D bodies ----
function Scene() {
  return (
    <svg
      viewBox="0 89 1920 901"
      className="absolute inset-0 size-full"
      fill="none"
      aria-label="Model"
    >
      <defs>
        <filter id="soft3" x="-50%" y="-50%" width="200%" height="200%">
          <feGaussianBlur stdDeviation="3" />
        </filter>
        <filter id="soft5" x="-50%" y="-50%" width="200%" height="200%">
          <feGaussianBlur stdDeviation="5" />
        </filter>
        <clipPath id="torusClip">
          <path
            clipRule="evenodd"
            d="M896.500 399C897 345 960 305 1037 305S1178 345 1178 399 1113 494 1037 494 896 453 896.500 399zM963.500 400C972 418 1004 427 1037 427S1103 417 1111.500 399C1100 381 1068 372 1037 372S974 382 963.500 400z"
          />
        </clipPath>
        <clipPath id="ballClip">
          <circle cx="686" cy="570" r="67" />
        </clipPath>
        <linearGradient id="rimShade" x1="0" y1="0" x2="1" y2="0">
          <stop offset="0" stopColor="#3565b0" />
          <stop offset="0.500" stopColor="#2a5ba8" />
          <stop offset="0.750" stopColor="#2254a0" />
          <stop offset="1" stopColor="#2c5da8" />
        </linearGradient>
        <linearGradient id="ballBase" x1="0.400" y1="0" x2="0.600" y2="1">
          <stop offset="0" stopColor="#817b70" />
          <stop offset="0.600" stopColor="#7b7b75" />
          <stop offset="0.820" stopColor="#5a5852" />
          <stop offset="1" stopColor="#5f5b52" />
        </linearGradient>
        <radialGradient id="glint">
          <stop offset="0" stopColor="#fff" />
          <stop offset="0.350" stopColor="#fff" stopOpacity="0.850" />
          <stop offset="1" stopColor="#fff" stopOpacity="0" />
        </radialGradient>
        <linearGradient id="boxTop" x1="0" y1="1" x2="1" y2="0">
          <stop offset="0" stopColor="#3f6fb8" />
          <stop offset="1" stopColor="#3868b1" />
        </linearGradient>
      </defs>

      {/* Torus */}
      <g clipPath="url(#torusClip)">
        <path d="M890 300h300v200H890z" fill="#3a69b4" />
        <g filter="url(#soft5)">
          <path
            d="M896 405C905 460 970 496 1037 496S1165 470 1180 420"
            stroke="url(#rimShade)"
            strokeWidth="32"
          />
          <path d="M935 375C950 330 1000 322 1040 323S1115 335 1124 362 1110 420 1080 432" stroke="#4c7ac2" strokeWidth="17" />
          <path d="M912 385C925 430 985 446 1035 446S1095 440 1118 415" stroke="#4c7ac2" strokeWidth="17" />
          <path d="M1115 315C1150 345 1152 390 1125 430" stroke="#3162ac" strokeWidth="12" />
          <path d="M1150 335C1176 370 1172 410 1140 440" stroke="#477bca" strokeWidth="11" />
          <path d="M950 357C970 335 1010 340 1055 338" stroke="#2e60ab" strokeWidth="12" />
          <path d="M952 372C945 385 948 398 960 410" stroke="#4279ca" strokeWidth="11" />
        </g>
        <g filter="url(#soft3)">
          <path d="M966 392C980 366 1010 360 1037 361S1095 368 1110 386" stroke="#1d509c" strokeWidth="18" />
          <path d="M1012 350C1045 344 1080 350 1108 367" stroke="#3f70bd" strokeWidth="5" />
          <path d="M906 402C940 445 990 464 1038 461" stroke="#2f61ae" strokeWidth="7" />
          <path d="M912 420C945 462 1000 475 1045 471S1095 460 1130 443" stroke="#4273c0" strokeWidth="6" />
          <path d="M965 402C980 424 1010 430 1040 430S1100 420 1110 402" stroke="#3263ae" strokeWidth="6" />
          <ellipse cx="1041" cy="331" rx="14" ry="3" fill="#7aaafa" />
          <ellipse cx="1031" cy="452" rx="20" ry="3" fill="#80b0ff" />
        </g>
        <ellipse cx="1037" cy="399.500" rx="140.500" ry="94.500" stroke="#5a90e0" opacity="0.600" />
      </g>

      {/* Sphere */}
      <g clipPath="url(#ballClip)">
        <circle cx="686" cy="570" r="68" fill="url(#ballBase)" />
        <g filter="url(#soft5)">
          <path d="M642 548C650 515 700 500 720 530S715 575 690 580 650 570 642 548z" fill="#6b6558" />
          <path d="M650 530C665 515 690 525 700 550" stroke="#968e81" strokeWidth="16" />
          <path d="M725 515C748 535 748 565 725 582" stroke="#8f9591" strokeWidth="13" />
          <path d="M628 555C638 602 690 607 730 587" stroke="#898b85" strokeWidth="15" />
          <path d="M712 628C735 617 750 600 756 580" stroke="#4f4a42" strokeWidth="24" />
          <path d="M625 605C645 637 715 642 745 612" stroke="#55524b" strokeWidth="18" />
        </g>
        <g filter="url(#soft3)">
          <path d="M640 545C650 564 665 574 695 581" stroke="#5d574b" strokeWidth="10" />
          <path d="M636 557C650 573 675 588 708 588L708 575" stroke="#a5a5a2" strokeWidth="6" />
          <path d="M642 572C655 586 670 592 688 593" stroke="#7b7870" strokeWidth="5" />
          <path d="M630 545C640 515 670 505 690 508" stroke="#75756c" strokeWidth="5" />
          <path d="M692 509C720 518 727 545 719 564" stroke="#5e584c" strokeWidth="9" />
        </g>
        <circle cx="686" cy="554" r="13" fill="url(#glint)" />
        <circle cx="686" cy="570" r="66.500" stroke="#67645b" />
      </g>

      {/* Box */}
      <g stroke="#083a86" strokeLinejoin="round">
        <path d="M878.500 586.500L1003 668.500 865 736 740.500 654z" fill="url(#boxTop)" />
        <path d="M740.500 654L865 736l2 118-124.500-82z" fill="#3063b0" />
        <path d="M1003 668.500L865 736l2 118 138.500-67z" fill="#2558a2" />
      </g>
    </svg>
  );
}
